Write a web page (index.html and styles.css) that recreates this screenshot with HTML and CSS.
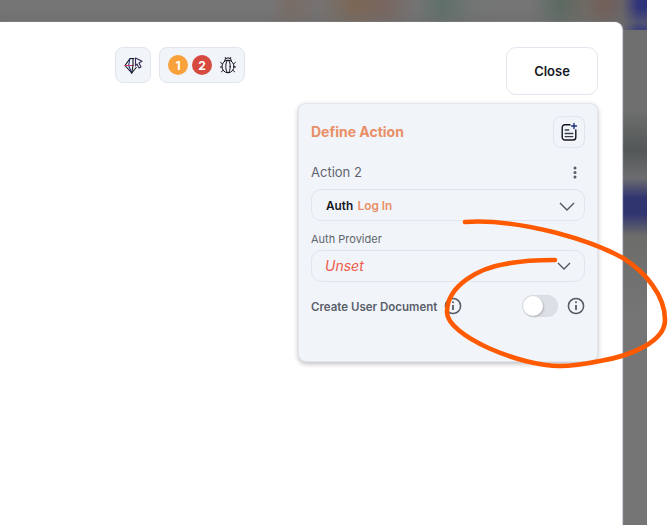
FILE: index.html
```html
<!DOCTYPE html>
<html lang="en">
<head>
<meta charset="utf-8">
<title>Define Action</title>
<link rel="stylesheet" href="styles.css">
</head>
<body>
<div class="backdrop">
  <div class="modal">
    <div class="toolbar">
      <div class="tool-group">
        <button class="chip chip-icon" type="button" aria-label="Theme">
          <svg width="20" height="20" viewBox="0 0 20 20" fill="none" stroke-width="1.1" stroke-linejoin="round" stroke-linecap="round">
            <path d="M11 3.5H7L2 10.5 8.7 18l4.5-5.5" stroke="#14141c"/>
            <path d="M7 3.5 5.6 10.5 8.7 18" stroke="#22307a"/>
            <path d="M2 10.5h8" stroke="#c8396a"/>
            <path d="M10 4v6.5L8.7 18" stroke="#14141c"/>
            <path d="M12.5 3 19 6.3 16 8 18 12 16 13 14 9 12.5 11z" stroke="#3a2a5a"/>
          </svg>
        </button>
        <div class="chip chip-debug">
          <span class="badge badge-warn">1</span>
          <span class="badge badge-err">2</span>
          <svg class="bug" width="20" height="20" viewBox="0 0 20 20" fill="none" stroke="#15151f" stroke-width="1" stroke-linecap="round">
            <ellipse cx="10" cy="11.5" rx="6" ry="6.3"/>
            <ellipse cx="10" cy="11.5" rx="2.2" ry="6.3"/>
            <path d="M6.4 6.4a3.6 3.6 0 0 1 7.2 0"/>
            <path d="M7.2 2.4 8.2 3.8M12.8 2.4l-1 1.4"/>
            <path d="M4.4 9 2.6 7.4M15.6 9l1.8-1.6M4 12H2.4M16 12h1.6M5 15.4 3.4 16.8M15 15.4l1.6 1.4"/>
          </svg>
        </div>
      </div>
      <button class="close" type="button">Close</button>
    </div>
    <section class="panel">
      <header class="panel-head">
        <h2 class="panel-title">Define Action</h2>
        <button class="doc-btn" type="button" aria-label="Add">
          <svg width="20" height="20" viewBox="0 0 20 20" fill="none" stroke-linecap="round" stroke-width="1.4">
            <path d="M11 2.7H6A2.8 2.8 0 0 0 3.2 5.5v9.7A2.8 2.8 0 0 0 6 18h8a2.8 2.8 0 0 0 2.8-2.8V8" stroke="#15151f"/>
            <path d="M6.2 8h3.6M6.2 11.5h7.6M6.2 14.6h7.6" stroke="#3a3f4b"/>
            <path d="M15 1.5v5M12.5 4h5" stroke="#1c2f7a"/>
          </svg>
        </button>
      </header>
      <div class="action-row">
        <span class="action-name">Action 2</span>
        <svg class="dots" width="4" height="13" viewBox="0 0 4 13" fill="#575c66"><circle cx="2" cy="2" r="1.5"/><circle cx="2" cy="6.5" r="1.5"/><circle cx="2" cy="11" r="1.5"/></svg>
      </div>
      <div class="select select-action">
        <span><b class="sel-main">Auth</b> <b class="sel-sub">Log In</b></span>
        <svg width="16" height="9" viewBox="0 0 16 9" fill="none" stroke="#50555f" stroke-width="1.4"><path d="M1 1l7 7 7-7"/></svg>
      </div>
      <label class="field-label">Auth Provider</label>
      <div class="select select-provider">
        <em class="unset">Unset</em>
        <svg width="14" height="8" viewBox="0 0 14 8" fill="none" stroke="#50555f" stroke-width="1.3"><path d="M1 1l6 6 6-6"/></svg>
      </div>
      <div class="switch-row">
        <span class="switch-label">Create User Document</span>
        <svg class="info" width="18" height="18" viewBox="0 0 18 18" fill="none" stroke="#555a64"><circle cx="9" cy="9" r="7.6" stroke-width="1.5"/><path d="M9 8v5" stroke-width="1.8"/><circle cx="9" cy="5.3" r="1" fill="#555a64" stroke="none"/></svg>
        <span class="toggle"><span class="knob"></span></span>
        <svg class="info" width="18" height="18" viewBox="0 0 18 18" fill="none" stroke="#555a64"><circle cx="9" cy="9" r="7.6" stroke-width="1.5"/><path d="M9 8v5" stroke-width="1.8"/><circle cx="9" cy="5.3" r="1" fill="#555a64" stroke="none"/></svg>
      </div>
    </section>
  </div>
</div>
<svg class="scribble" width="668" height="525" viewBox="0 0 668 525" fill="none" stroke="#ff5a00" stroke-width="4.6" stroke-linecap="round" stroke-linejoin="round">
  <path d="M465 222C495 220 530 226 557 233C580 239 603 247 623 258C645 272 665 295 665 320C665 342 630 356 600 361C585 364 575 366 560 366C520 366 447 336 447 312C447 285 480 268 505 264C520 261 535 260 555 260"/>
</svg>
</body>
</html>
```
FILE: styles.css
```css
* { box-sizing: border-box; }
html, body { margin: 0; height: 100%; background: #fff; overflow: hidden; }
body { font-family: "Inter", "Liberation Sans", sans-serif; position: relative; width: 668px; height: 525px; }
button { font-family: inherit; padding: 0; cursor: pointer; }

.backdrop {
  width: 647px;
  height: 525px;
  padding: 22px 25px 0 0;
  background:
    linear-gradient(180deg, rgba(108,108,108,0) 8px, rgba(108,108,108,.55) 22px, rgba(112,112,112,0) 34px) top / 100% 34px no-repeat,
    linear-gradient(90deg, #757575 270px, #7a6c66 290px, #757372 320px, #7c6755 355px, #786660 385px, #747474 415px, #5f7069 442px, #737574 475px, #757575 530px, #5c6a62 560px, #6f6a64 585px, #725f58 605px, #6a6468 622px, #30347a 638px, #30347a 647px) top / 100% 30px no-repeat,
    linear-gradient(180deg, #6f6f6f 30px, #6e6f6e 110px, #535757 150px, #6d6d70 178px, #30346f 198px, #30346f 214px, #6c6d6b 236px, #757575 320px) right / 25px 100% no-repeat,
    #747474;
}
.modal {
  height: 503px;
  background: #fff;
  border-top-right-radius: 8px;
  padding: 25px 24px 0 0;
  box-shadow: 1px 0 1px #d8dae6;
}
.toolbar { display: flex; justify-content: space-between; align-items: flex-start; padding-left: 115px; height: 48px; }
.tool-group { display: flex; gap: 8px; }
.chip {
  height: 36px;
  background: #f1f4f9;
  border: 1px solid #e1e5ee;
  border-radius: 8px;
  display: flex;
  align-items: center;
}
.chip-icon { width: 36px; justify-content: center; }
.chip-debug { width: 86px; padding-left: 8px; gap: 4px; }
.badge {
  width: 20px; height: 20px; border-radius: 50%;
  color: #fff; font-size: 12px; font-weight: 700;
  display: flex; align-items: center; justify-content: center;
}
.badge-warn { background: #f9a23c; }
.badge-err { background: #d64a40; }
.bug { margin-left: 2px; }
.close {
  width: 92px; height: 48px;
  background: #fff;
  border: 1px solid #e3e5ee;
  border-radius: 10px;
  font-size: 13px; font-weight: 600; color: #14181f;
}
.panel {
  width: 300px;
  height: 259px;
  margin: 8px 0 0 auto;
  background: #f1f4f9;
  border: 1px solid #e2e5ec;
  border-radius: 8px;
  box-shadow: 0 2px 5px rgba(0,0,0,.25);
  padding: 12px 12px 0;
}
.panel-head { display: flex; justify-content: space-between; align-items: center; height: 32px; }
.panel-title { margin: 0 0 2px; font-size: 14px; font-weight: 700; color: #e98f65; }
.doc-btn {
  width: 32px; height: 32px; border-radius: 8px;
  background: #f1f4f9; border: 1px solid #e2e5ec;
  display: flex; align-items: center; justify-content: center;
}
.action-row { display: flex; justify-content: space-between; align-items: center; margin-top: 14px; padding-right: 8px; height: 20px; }
.action-name { font-size: 13px; color: #5f646e; }
.select {
  height: 32px;
  border: 1px solid #e2e5ec;
  border-radius: 10px;
  display: flex; align-items: center; justify-content: space-between;
}
.select-action { margin-top: 7px; padding: 2px 9px 0 14px; font-size: 11.8px; }
.sel-main { font-weight: 600; color: #14181f; }
.sel-sub { font-weight: 600; color: #e98f65; margin-left: 1px; }
.field-label { display: block; margin-top: 10px; height: 16px; font-size: 11px; color: #5f646e; line-height: 16px; }
.select-provider { margin-top: 3px; padding: 0 13px 0 13px; }
.unset { font-size: 14px; color: #ef5a4a; margin-bottom: 2px; }
.switch-row { display: flex; align-items: center; margin-top: 13px; height: 22px; }
.switch-label { font-size: 11.5px; font-weight: 600; color: #5a5f69; padding-top: 2px; }
.switch-row .info:first-of-type { margin-left: 7px; }
.toggle {
  width: 36px; height: 22px; border-radius: 11px;
  background: #dcdfe5;
  margin-left: auto;
  margin-right: 9px;
  display: flex; align-items: center;
  box-shadow: inset 0 0 2px rgba(0,0,0,.05);
}
.knob { width: 20px; height: 20px; margin-left: 1px; border-radius: 50%; background: #fff; box-shadow: 1px 1px 2px rgba(0,0,0,.2); }
.scribble { position: absolute; left: 0; top: 0; pointer-events: none; }
```
